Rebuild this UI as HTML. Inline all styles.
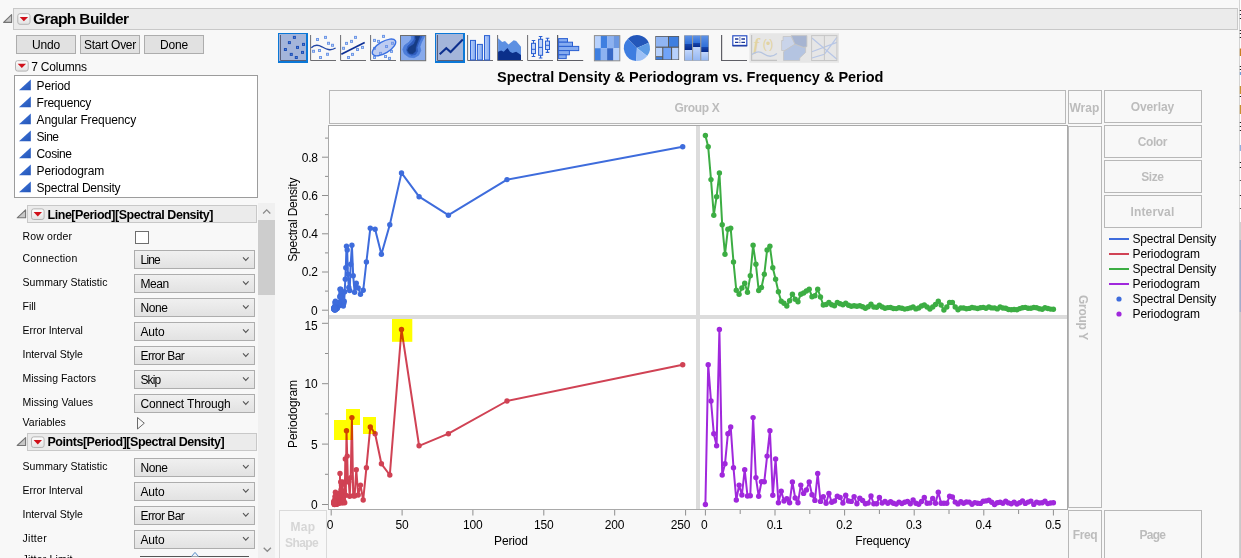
<!DOCTYPE html>
<html lang="en"><head><meta charset="utf-8"><title>Graph Builder</title>
<style>
html,body{margin:0;padding:0}
body{width:1241px;height:558px;overflow:hidden;background:#f8f8f8;position:relative;font-family:"Liberation Sans",sans-serif}
.t{position:absolute;white-space:nowrap;display:block}
.b{position:absolute;box-sizing:border-box}
svg{position:absolute;left:0;top:0}
svg text{font-family:"Liberation Sans",sans-serif}
</style></head>
<body>
<div class="b " style="left:13px;top:8px;width:1225px;height:22px;background:#ebebeb;border:1px solid #c8c8c8;"></div>
<span class="t " style="left:33.00px;top:9.80px;font-size:15.5px;line-height:17px;letter-spacing:-0.604px;color:#000;font-weight:bold;">Graph Builder</span>
<div class="b btn" style="left:16px;top:35px;width:60px;height:19px;background:#e1e1e1;border:1px solid #adadad;"></div>
<span class="t " style="left:32.06px;top:37.80px;font-size:12px;line-height:14px;letter-spacing:-0.200px;color:#000;">Undo</span>
<div class="b btn" style="left:80px;top:35px;width:60px;height:19px;background:#e1e1e1;border:1px solid #adadad;"></div>
<span class="t " style="left:84.00px;top:37.80px;font-size:12px;line-height:14px;letter-spacing:-0.268px;color:#000;">Start Over</span>
<div class="b btn" style="left:144px;top:35px;width:60px;height:19px;background:#e1e1e1;border:1px solid #adadad;"></div>
<span class="t " style="left:160.06px;top:37.80px;font-size:12px;line-height:14px;letter-spacing:-0.200px;color:#000;">Done</span>
<span class="t " style="left:31.20px;top:59.80px;font-size:12px;line-height:14px;letter-spacing:-0.195px;color:#000;">7 Columns</span>
<div class="b " style="left:14px;top:75px;width:244px;height:123px;background:#fff;border:1px solid #9c9c9c;"></div>
<span class="t " style="left:36.60px;top:78.80px;font-size:12px;line-height:14px;letter-spacing:-0.156px;color:#000;">Period</span>
<span class="t " style="left:36.60px;top:95.80px;font-size:12px;line-height:14px;letter-spacing:-0.244px;color:#000;">Frequency</span>
<span class="t " style="left:36.60px;top:112.80px;font-size:12px;line-height:14px;letter-spacing:-0.111px;color:#000;">Angular Frequency</span>
<span class="t " style="left:36.60px;top:129.80px;font-size:12px;line-height:14px;letter-spacing:-0.567px;color:#000;">Sine</span>
<span class="t " style="left:36.60px;top:146.80px;font-size:12px;line-height:14px;letter-spacing:-0.392px;color:#000;">Cosine</span>
<span class="t " style="left:36.60px;top:163.80px;font-size:12px;line-height:14px;letter-spacing:-0.109px;color:#000;">Periodogram</span>
<span class="t " style="left:36.60px;top:180.80px;font-size:12px;line-height:14px;letter-spacing:-0.226px;color:#000;">Spectral Density</span>
<div class="b " style="left:258px;top:203px;width:17px;height:355px;background:#f0f0f0;"></div>
<div class="b " style="left:258px;top:220px;width:17px;height:75px;background:#cdcdcd;"></div>
<div class="b " style="left:27px;top:205px;width:230px;height:18px;background:#ebebeb;border:1px solid #c8c8c8;"></div>
<span class="t " style="left:47.50px;top:207.60px;font-size:12.5px;line-height:14px;letter-spacing:-0.456px;color:#000;font-weight:bold;">Line[Period][Spectral Density]</span>
<div class="b " style="left:27px;top:433px;width:230px;height:18px;background:#ebebeb;border:1px solid #c8c8c8;"></div>
<span class="t " style="left:47.50px;top:435.30px;font-size:12.5px;line-height:14px;letter-spacing:-0.468px;color:#000;font-weight:bold;">Points[Period][Spectral Density]</span>
<span class="t " style="left:22.50px;top:229.80px;font-size:10.5px;line-height:12px;letter-spacing:0.130px;color:#000;">Row order</span>
<div class="b " style="left:135px;top:231px;width:14px;height:13px;background:#fff;border:1px solid #6e6e6e;"></div>
<div class="b " style="left:134px;top:250px;width:121px;height:19px;background:linear-gradient(#f0f0f0,#e2e2e2);border:1px solid #adadad;"></div>
<span class="t " style="left:22.50px;top:251.80px;font-size:10.5px;line-height:12px;letter-spacing:0.178px;color:#000;">Connection</span>
<span class="t " style="left:140.50px;top:253.00px;font-size:12px;line-height:14px;letter-spacing:-0.797px;color:#000;">Line</span>
<div class="b " style="left:134px;top:274px;width:121px;height:19px;background:linear-gradient(#f0f0f0,#e2e2e2);border:1px solid #adadad;"></div>
<span class="t " style="left:22.50px;top:275.80px;font-size:10.5px;line-height:12px;letter-spacing:0.018px;color:#000;">Summary Statistic</span>
<span class="t " style="left:140.50px;top:277.00px;font-size:12px;line-height:14px;letter-spacing:-0.442px;color:#000;">Mean</span>
<div class="b " style="left:134px;top:298px;width:121px;height:19px;background:linear-gradient(#f0f0f0,#e2e2e2);border:1px solid #adadad;"></div>
<span class="t " style="left:22.50px;top:299.80px;font-size:10.5px;line-height:12px;letter-spacing:-0.003px;color:#000;">Fill</span>
<span class="t " style="left:140.50px;top:301.00px;font-size:12px;line-height:14px;letter-spacing:-0.422px;color:#000;">None</span>
<div class="b " style="left:134px;top:322px;width:121px;height:19px;background:linear-gradient(#f0f0f0,#e2e2e2);border:1px solid #adadad;"></div>
<span class="t " style="left:22.50px;top:323.80px;font-size:10.5px;line-height:12px;letter-spacing:-0.020px;color:#000;">Error Interval</span>
<span class="t " style="left:140.50px;top:325.00px;font-size:12px;line-height:14px;letter-spacing:-0.171px;color:#000;">Auto</span>
<div class="b " style="left:134px;top:346px;width:121px;height:19px;background:linear-gradient(#f0f0f0,#e2e2e2);border:1px solid #adadad;"></div>
<span class="t " style="left:22.50px;top:347.80px;font-size:10.5px;line-height:12px;letter-spacing:-0.021px;color:#000;">Interval Style</span>
<span class="t " style="left:140.50px;top:349.00px;font-size:12px;line-height:14px;letter-spacing:-0.547px;color:#000;">Error Bar</span>
<div class="b " style="left:134px;top:370px;width:121px;height:19px;background:linear-gradient(#f0f0f0,#e2e2e2);border:1px solid #adadad;"></div>
<span class="t " style="left:22.50px;top:371.80px;font-size:10.5px;line-height:12px;letter-spacing:-0.008px;color:#000;">Missing Factors</span>
<span class="t " style="left:140.50px;top:373.00px;font-size:12px;line-height:14px;letter-spacing:-0.911px;color:#000;">Skip</span>
<div class="b " style="left:134px;top:394px;width:121px;height:19px;background:linear-gradient(#f0f0f0,#e2e2e2);border:1px solid #adadad;"></div>
<span class="t " style="left:22.50px;top:395.80px;font-size:10.5px;line-height:12px;letter-spacing:0.055px;color:#000;">Missing Values</span>
<span class="t " style="left:140.50px;top:397.00px;font-size:12px;line-height:14px;letter-spacing:-0.167px;color:#000;">Connect Through</span>
<span class="t " style="left:22.50px;top:415.80px;font-size:10.5px;line-height:12px;letter-spacing:0.045px;color:#000;">Variables</span>
<div class="b " style="left:134px;top:458px;width:121px;height:19px;background:linear-gradient(#f0f0f0,#e2e2e2);border:1px solid #adadad;"></div>
<span class="t " style="left:22.50px;top:459.55px;font-size:10.5px;line-height:12px;letter-spacing:0.018px;color:#000;">Summary Statistic</span>
<span class="t " style="left:140.50px;top:460.75px;font-size:12px;line-height:14px;letter-spacing:-0.422px;color:#000;">None</span>
<div class="b " style="left:134px;top:482px;width:121px;height:19px;background:linear-gradient(#f0f0f0,#e2e2e2);border:1px solid #adadad;"></div>
<span class="t " style="left:22.50px;top:483.55px;font-size:10.5px;line-height:12px;letter-spacing:-0.020px;color:#000;">Error Interval</span>
<span class="t " style="left:140.50px;top:484.75px;font-size:12px;line-height:14px;letter-spacing:-0.171px;color:#000;">Auto</span>
<div class="b " style="left:134px;top:506px;width:121px;height:19px;background:linear-gradient(#f0f0f0,#e2e2e2);border:1px solid #adadad;"></div>
<span class="t " style="left:22.50px;top:507.55px;font-size:10.5px;line-height:12px;letter-spacing:-0.021px;color:#000;">Interval Style</span>
<span class="t " style="left:140.50px;top:508.75px;font-size:12px;line-height:14px;letter-spacing:-0.547px;color:#000;">Error Bar</span>
<div class="b " style="left:134px;top:530px;width:121px;height:19px;background:linear-gradient(#f0f0f0,#e2e2e2);border:1px solid #adadad;"></div>
<span class="t " style="left:22.50px;top:531.55px;font-size:10.5px;line-height:12px;letter-spacing:0.274px;color:#000;">Jitter</span>
<span class="t " style="left:140.50px;top:532.75px;font-size:12px;line-height:14px;letter-spacing:-0.171px;color:#000;">Auto</span>
<span class="t " style="left:22.50px;top:553.00px;font-size:10.5px;line-height:12px;letter-spacing:0.180px;color:#000;">Jitter Limit</span>
<div class="b " style="left:329px;top:90px;width:737px;height:34px;background:#f8f8f8;border:1px solid #b8b8b8;"></div>
<span class="t " style="left:674.40px;top:100.80px;font-size:12px;line-height:14px;letter-spacing:-0.333px;color:#bcbcbc;font-weight:bold;">Group X</span>
<div class="b " style="left:1068px;top:90px;width:34px;height:34px;background:#f8f8f8;border:1px solid #b8b8b8;"></div>
<span class="t " style="left:1069.53px;top:100.80px;font-size:12px;line-height:14px;letter-spacing:-0.008px;color:#bcbcbc;font-weight:bold;">Wrap</span>
<div class="b " style="left:1104px;top:90px;width:98px;height:33px;background:#f8f8f8;border:1px solid #b8b8b8;"></div>
<span class="t " style="left:1130.65px;top:100.30px;font-size:12px;line-height:14px;letter-spacing:-0.076px;color:#bcbcbc;font-weight:bold;">Overlay</span>
<div class="b " style="left:1104px;top:125px;width:98px;height:33px;background:#f8f8f8;border:1px solid #b8b8b8;"></div>
<span class="t " style="left:1137.65px;top:135.30px;font-size:12px;line-height:14px;letter-spacing:-0.366px;color:#bcbcbc;font-weight:bold;">Color</span>
<div class="b " style="left:1104px;top:160px;width:98px;height:33px;background:#f8f8f8;border:1px solid #b8b8b8;"></div>
<span class="t " style="left:1141.15px;top:170.30px;font-size:12px;line-height:14px;letter-spacing:-0.378px;color:#bcbcbc;font-weight:bold;">Size</span>
<div class="b " style="left:1104px;top:195px;width:98px;height:33px;background:#f8f8f8;border:1px solid #b8b8b8;"></div>
<span class="t " style="left:1130.40px;top:205.30px;font-size:12px;line-height:14px;letter-spacing:0.164px;color:#bcbcbc;font-weight:bold;">Interval</span>
<div class="b " style="left:1068px;top:126px;width:34px;height:382px;background:#f8f8f8;border:1px solid #b8b8b8;"></div>
<div class="b " style="left:1068px;top:510px;width:34px;height:52px;background:#f8f8f8;border:1px solid #b8b8b8;"></div>
<span class="t " style="left:1072.75px;top:527.80px;font-size:12px;line-height:14px;letter-spacing:-0.376px;color:#bcbcbc;font-weight:bold;">Freq</span>
<div class="b " style="left:1104px;top:510px;width:98px;height:52px;background:#f8f8f8;border:1px solid #b8b8b8;"></div>
<span class="t " style="left:1139.53px;top:527.80px;font-size:12px;line-height:14px;letter-spacing:-0.733px;color:#bcbcbc;font-weight:bold;">Page</span>
<div class="b " style="left:279px;top:510px;width:48px;height:52px;background:#f8f8f8;border:1px solid #dadada;"></div>
<span class="t " style="left:290.50px;top:519.80px;font-size:12px;line-height:14px;letter-spacing:0.333px;color:#d6d6d6;font-weight:bold;">Map</span>
<span class="t " style="left:284.98px;top:535.70px;font-size:12px;line-height:14px;letter-spacing:-0.552px;color:#d6d6d6;font-weight:bold;">Shape</span>
<span class="t title" style="left:497.00px;top:69.30px;font-size:14.5px;line-height:16px;letter-spacing:-0.006px;color:#000;font-weight:bold;">Spectral Density &amp; Periodogram vs. Frequency &amp; Period</span>
<span class="t " style="left:1132.50px;top:232.20px;font-size:12px;line-height:14px;letter-spacing:-0.242px;color:#000;">Spectral Density</span>
<span class="t " style="left:1132.50px;top:247.20px;font-size:12px;line-height:14px;letter-spacing:-0.109px;color:#000;">Periodogram</span>
<span class="t " style="left:1132.50px;top:262.20px;font-size:12px;line-height:14px;letter-spacing:-0.242px;color:#000;">Spectral Density</span>
<span class="t " style="left:1132.50px;top:277.20px;font-size:12px;line-height:14px;letter-spacing:-0.109px;color:#000;">Periodogram</span>
<span class="t " style="left:1132.50px;top:292.20px;font-size:12px;line-height:14px;letter-spacing:-0.242px;color:#000;">Spectral Density</span>
<span class="t " style="left:1132.50px;top:307.20px;font-size:12px;line-height:14px;letter-spacing:-0.109px;color:#000;">Periodogram</span>
<svg width="1241" height="558" viewBox="0 0 1241 558">
<rect x="328" y="125" width="740" height="385" fill="#fff"/>
<defs><clipPath id="cTL"><rect x="329" y="126" width="367" height="189"/></clipPath><clipPath id="cTR"><rect x="700" y="126" width="367.5" height="189"/></clipPath><clipPath id="cBL"><rect x="329" y="319" width="367" height="190"/></clipPath><clipPath id="cBR"><rect x="700" y="319" width="367.5" height="190"/></clipPath></defs>
<g clip-path="url(#cTL)"><polyline points="682.7,146.8 507.0,179.6 448.4,215.2 419.1,196.7 401.5,172.9 389.8,224.8 381.4,254.3 375.1,229.2 370.3,228.3 366.4,262.0 363.2,290.3 360.5,294.2 358.2,288.0 356.3,283.3 354.6,292.3 353.2,275.8 351.9,245.3 350.7,264.3 349.7,290.5 348.8,287.5 347.9,274.2 347.2,250.0 346.5,246.3 345.8,267.8 345.3,279.2 344.7,291.7 344.2,301.3 343.8,303.3 343.3,306.0 342.9,300.8 342.5,294.2 342.2,299.2 341.9,301.7 341.5,294.2 341.2,293.0 341.0,291.0 340.7,289.2 340.5,296.7 340.2,295.8 340.0,289.2 339.8,297.0 339.6,305.0 339.4,304.5 339.2,302.5 339.0,304.7 338.8,305.8 338.7,302.5 338.5,303.7 338.4,304.7 338.2,303.3 338.1,305.3 338.0,306.3 337.8,305.7 337.7,306.3 337.6,305.8 337.5,306.7 337.4,308.3 337.3,306.7 337.2,304.2 337.1,307.0 337.0,307.3 336.9,305.3 336.8,307.0 336.7,308.3 336.6,307.6 336.5,307.5 336.4,308.5 336.4,308.6 336.3,307.8 336.2,308.2 336.2,309.1 336.1,308.6 336.0,307.9 336.0,307.0 335.9,308.9 335.8,308.0 335.8,306.0 335.7,305.0 335.6,307.0 335.6,309.0 335.5,307.0 335.5,304.5 335.4,301.3 335.4,305.0 335.3,310.0 335.3,307.0 335.2,302.5 335.2,302.5 335.1,307.0 335.1,309.7 335.1,308.0 335.0,308.0 335.0,308.8 334.9,308.4 334.9,307.5 334.9,307.9 334.8,308.5 334.8,307.8 334.8,307.4 334.7,308.2 334.7,307.0 334.6,307.9 334.6,307.9 334.6,308.9 334.5,307.0 334.5,308.0 334.5,308.3 334.5,309.5 334.4,309.7 334.4,309.5 334.4,309.7 334.3,308.6 334.3,307.7 334.3,307.4 334.3,308.3 334.2,308.3 334.2,307.5 334.2,307.8 334.2,308.8 334.1,309.3 334.1,307.8 334.1,308.5 334.1,309.1 334.0,309.2" fill="none" stroke="#3e6cdc" stroke-width="2" stroke-linejoin="round"/>
<circle cx="682.7" cy="146.8" r="2.7" fill="#3e6cdc"/><circle cx="507.0" cy="179.6" r="2.7" fill="#3e6cdc"/><circle cx="448.4" cy="215.2" r="2.7" fill="#3e6cdc"/><circle cx="419.1" cy="196.7" r="2.7" fill="#3e6cdc"/><circle cx="401.5" cy="172.9" r="2.7" fill="#3e6cdc"/><circle cx="389.8" cy="224.8" r="2.7" fill="#3e6cdc"/><circle cx="381.4" cy="254.3" r="2.7" fill="#3e6cdc"/><circle cx="375.1" cy="229.2" r="2.7" fill="#3e6cdc"/><circle cx="370.3" cy="228.3" r="2.7" fill="#3e6cdc"/><circle cx="366.4" cy="262.0" r="2.7" fill="#3e6cdc"/><circle cx="363.2" cy="290.3" r="2.7" fill="#3e6cdc"/><circle cx="360.5" cy="294.2" r="2.7" fill="#3e6cdc"/><circle cx="358.2" cy="288.0" r="2.7" fill="#3e6cdc"/><circle cx="356.3" cy="283.3" r="2.7" fill="#3e6cdc"/><circle cx="354.6" cy="292.3" r="2.7" fill="#3e6cdc"/><circle cx="353.2" cy="275.8" r="2.7" fill="#3e6cdc"/><circle cx="351.9" cy="245.3" r="2.7" fill="#3e6cdc"/><circle cx="350.7" cy="264.3" r="2.7" fill="#3e6cdc"/><circle cx="349.7" cy="290.5" r="2.7" fill="#3e6cdc"/><circle cx="348.8" cy="287.5" r="2.7" fill="#3e6cdc"/><circle cx="347.9" cy="274.2" r="2.7" fill="#3e6cdc"/><circle cx="347.2" cy="250.0" r="2.7" fill="#3e6cdc"/><circle cx="346.5" cy="246.3" r="2.7" fill="#3e6cdc"/><circle cx="345.8" cy="267.8" r="2.7" fill="#3e6cdc"/><circle cx="345.3" cy="279.2" r="2.7" fill="#3e6cdc"/><circle cx="344.7" cy="291.7" r="2.7" fill="#3e6cdc"/><circle cx="344.2" cy="301.3" r="2.7" fill="#3e6cdc"/><circle cx="343.8" cy="303.3" r="2.7" fill="#3e6cdc"/><circle cx="343.3" cy="306.0" r="2.7" fill="#3e6cdc"/><circle cx="342.9" cy="300.8" r="2.7" fill="#3e6cdc"/><circle cx="342.5" cy="294.2" r="2.7" fill="#3e6cdc"/><circle cx="342.2" cy="299.2" r="2.7" fill="#3e6cdc"/><circle cx="341.9" cy="301.7" r="2.7" fill="#3e6cdc"/><circle cx="341.5" cy="294.2" r="2.7" fill="#3e6cdc"/><circle cx="341.2" cy="293.0" r="2.7" fill="#3e6cdc"/><circle cx="341.0" cy="291.0" r="2.7" fill="#3e6cdc"/><circle cx="340.7" cy="289.2" r="2.7" fill="#3e6cdc"/><circle cx="340.5" cy="296.7" r="2.7" fill="#3e6cdc"/><circle cx="340.2" cy="295.8" r="2.7" fill="#3e6cdc"/><circle cx="340.0" cy="289.2" r="2.7" fill="#3e6cdc"/><circle cx="339.8" cy="297.0" r="2.7" fill="#3e6cdc"/><circle cx="339.6" cy="305.0" r="2.7" fill="#3e6cdc"/><circle cx="339.4" cy="304.5" r="2.7" fill="#3e6cdc"/><circle cx="339.2" cy="302.5" r="2.7" fill="#3e6cdc"/><circle cx="339.0" cy="304.7" r="2.7" fill="#3e6cdc"/><circle cx="338.8" cy="305.8" r="2.7" fill="#3e6cdc"/><circle cx="338.7" cy="302.5" r="2.7" fill="#3e6cdc"/><circle cx="338.5" cy="303.7" r="2.7" fill="#3e6cdc"/><circle cx="338.4" cy="304.7" r="2.7" fill="#3e6cdc"/><circle cx="338.2" cy="303.3" r="2.7" fill="#3e6cdc"/><circle cx="338.1" cy="305.3" r="2.7" fill="#3e6cdc"/><circle cx="338.0" cy="306.3" r="2.7" fill="#3e6cdc"/><circle cx="337.8" cy="305.7" r="2.7" fill="#3e6cdc"/><circle cx="337.7" cy="306.3" r="2.7" fill="#3e6cdc"/><circle cx="337.6" cy="305.8" r="2.7" fill="#3e6cdc"/><circle cx="337.5" cy="306.7" r="2.7" fill="#3e6cdc"/><circle cx="337.4" cy="308.3" r="2.7" fill="#3e6cdc"/><circle cx="337.3" cy="306.7" r="2.7" fill="#3e6cdc"/><circle cx="337.2" cy="304.2" r="2.7" fill="#3e6cdc"/><circle cx="337.1" cy="307.0" r="2.7" fill="#3e6cdc"/><circle cx="337.0" cy="307.3" r="2.7" fill="#3e6cdc"/><circle cx="336.9" cy="305.3" r="2.7" fill="#3e6cdc"/><circle cx="336.8" cy="307.0" r="2.7" fill="#3e6cdc"/><circle cx="336.7" cy="308.3" r="2.7" fill="#3e6cdc"/><circle cx="336.6" cy="307.6" r="2.7" fill="#3e6cdc"/><circle cx="336.5" cy="307.5" r="2.7" fill="#3e6cdc"/><circle cx="336.4" cy="308.5" r="2.7" fill="#3e6cdc"/><circle cx="336.4" cy="308.6" r="2.7" fill="#3e6cdc"/><circle cx="336.3" cy="307.8" r="2.7" fill="#3e6cdc"/><circle cx="336.2" cy="308.2" r="2.7" fill="#3e6cdc"/><circle cx="336.2" cy="309.1" r="2.7" fill="#3e6cdc"/><circle cx="336.1" cy="308.6" r="2.7" fill="#3e6cdc"/><circle cx="336.0" cy="307.9" r="2.7" fill="#3e6cdc"/><circle cx="336.0" cy="307.0" r="2.7" fill="#3e6cdc"/><circle cx="335.9" cy="308.9" r="2.7" fill="#3e6cdc"/><circle cx="335.8" cy="308.0" r="2.7" fill="#3e6cdc"/><circle cx="335.8" cy="306.0" r="2.7" fill="#3e6cdc"/><circle cx="335.7" cy="305.0" r="2.7" fill="#3e6cdc"/><circle cx="335.6" cy="307.0" r="2.7" fill="#3e6cdc"/><circle cx="335.6" cy="309.0" r="2.7" fill="#3e6cdc"/><circle cx="335.5" cy="307.0" r="2.7" fill="#3e6cdc"/><circle cx="335.5" cy="304.5" r="2.7" fill="#3e6cdc"/><circle cx="335.4" cy="301.3" r="2.7" fill="#3e6cdc"/><circle cx="335.4" cy="305.0" r="2.7" fill="#3e6cdc"/><circle cx="335.3" cy="310.0" r="2.7" fill="#3e6cdc"/><circle cx="335.3" cy="307.0" r="2.7" fill="#3e6cdc"/><circle cx="335.2" cy="302.5" r="2.7" fill="#3e6cdc"/><circle cx="335.2" cy="302.5" r="2.7" fill="#3e6cdc"/><circle cx="335.1" cy="307.0" r="2.7" fill="#3e6cdc"/><circle cx="335.1" cy="309.7" r="2.7" fill="#3e6cdc"/><circle cx="335.1" cy="308.0" r="2.7" fill="#3e6cdc"/><circle cx="335.0" cy="308.0" r="2.7" fill="#3e6cdc"/><circle cx="335.0" cy="308.8" r="2.7" fill="#3e6cdc"/><circle cx="334.9" cy="308.4" r="2.7" fill="#3e6cdc"/><circle cx="334.9" cy="307.5" r="2.7" fill="#3e6cdc"/><circle cx="334.9" cy="307.9" r="2.7" fill="#3e6cdc"/><circle cx="334.8" cy="308.5" r="2.7" fill="#3e6cdc"/><circle cx="334.8" cy="307.8" r="2.7" fill="#3e6cdc"/><circle cx="334.8" cy="307.4" r="2.7" fill="#3e6cdc"/><circle cx="334.7" cy="308.2" r="2.7" fill="#3e6cdc"/><circle cx="334.7" cy="307.0" r="2.7" fill="#3e6cdc"/><circle cx="334.6" cy="307.9" r="2.7" fill="#3e6cdc"/><circle cx="334.6" cy="307.9" r="2.7" fill="#3e6cdc"/><circle cx="334.6" cy="308.9" r="2.7" fill="#3e6cdc"/><circle cx="334.5" cy="307.0" r="2.7" fill="#3e6cdc"/><circle cx="334.5" cy="308.0" r="2.7" fill="#3e6cdc"/><circle cx="334.5" cy="308.3" r="2.7" fill="#3e6cdc"/><circle cx="334.5" cy="309.5" r="2.7" fill="#3e6cdc"/><circle cx="334.4" cy="309.7" r="2.7" fill="#3e6cdc"/><circle cx="334.4" cy="309.5" r="2.7" fill="#3e6cdc"/><circle cx="334.4" cy="309.7" r="2.7" fill="#3e6cdc"/><circle cx="334.3" cy="308.6" r="2.7" fill="#3e6cdc"/><circle cx="334.3" cy="307.7" r="2.7" fill="#3e6cdc"/><circle cx="334.3" cy="307.4" r="2.7" fill="#3e6cdc"/><circle cx="334.3" cy="308.3" r="2.7" fill="#3e6cdc"/><circle cx="334.2" cy="308.3" r="2.7" fill="#3e6cdc"/><circle cx="334.2" cy="307.5" r="2.7" fill="#3e6cdc"/><circle cx="334.2" cy="307.8" r="2.7" fill="#3e6cdc"/><circle cx="334.2" cy="308.8" r="2.7" fill="#3e6cdc"/><circle cx="334.1" cy="309.3" r="2.7" fill="#3e6cdc"/><circle cx="334.1" cy="307.8" r="2.7" fill="#3e6cdc"/><circle cx="334.1" cy="308.5" r="2.7" fill="#3e6cdc"/><circle cx="334.1" cy="309.1" r="2.7" fill="#3e6cdc"/><circle cx="334.0" cy="309.2" r="2.7" fill="#3e6cdc"/></g>
<g clip-path="url(#cTR)"><polyline points="705.4,135.5 708.2,146.8 711.0,179.6 713.8,215.2 716.6,196.7 719.4,172.9 722.2,224.8 725.0,254.3 727.9,229.2 730.7,228.3 733.5,262.0 736.3,290.3 739.1,294.2 741.9,288.0 744.7,283.3 747.5,292.3 750.3,275.8 753.1,245.3 755.9,264.3 758.7,290.5 761.5,287.5 764.3,274.2 767.1,250.0 769.9,246.3 772.8,267.8 775.6,279.2 778.4,291.7 781.2,301.3 784.0,303.3 786.8,306.0 789.6,300.8 792.4,294.2 795.2,299.2 798.0,301.7 800.8,294.2 803.6,293.0 806.4,291.0 809.2,289.2 812.0,296.7 814.9,295.8 817.7,289.2 820.5,297.0 823.3,305.0 826.1,304.5 828.9,302.5 831.7,304.7 834.5,305.8 837.3,302.5 840.1,303.7 842.9,304.7 845.7,303.3 848.5,305.3 851.3,306.3 854.1,305.7 856.9,306.3 859.8,305.8 862.6,306.7 865.4,308.3 868.2,306.7 871.0,304.2 873.8,307.0 876.6,307.3 879.4,305.3 882.2,307.0 885.0,308.3 887.8,307.6 890.6,307.5 893.4,308.5 896.2,308.6 899.0,307.8 901.9,308.2 904.7,309.1 907.5,308.6 910.3,307.9 913.1,307.0 915.9,308.9 918.7,308.0 921.5,306.0 924.3,305.0 927.1,307.0 929.9,309.0 932.7,307.0 935.5,304.5 938.3,301.3 941.1,305.0 943.9,310.0 946.8,307.0 949.6,302.5 952.4,302.5 955.2,307.0 958.0,309.7 960.8,308.0 963.6,308.0 966.4,308.8 969.2,308.4 972.0,307.5 974.8,307.9 977.6,308.5 980.4,307.8 983.2,307.4 986.0,308.2 988.9,307.0 991.7,307.9 994.5,307.9 997.3,308.9 1000.1,307.0 1002.9,308.0 1005.7,308.3 1008.5,309.5 1011.3,309.7 1014.1,309.5 1016.9,309.7 1019.7,308.6 1022.5,307.7 1025.3,307.4 1028.1,308.3 1030.9,308.3 1033.8,307.5 1036.6,307.8 1039.4,308.8 1042.2,309.3 1045.0,307.8 1047.8,308.5 1050.6,309.1 1053.4,309.2" fill="none" stroke="#3cad43" stroke-width="2" stroke-linejoin="round"/>
<circle cx="705.4" cy="135.5" r="2.7" fill="#3cad43"/><circle cx="708.2" cy="146.8" r="2.7" fill="#3cad43"/><circle cx="711.0" cy="179.6" r="2.7" fill="#3cad43"/><circle cx="713.8" cy="215.2" r="2.7" fill="#3cad43"/><circle cx="716.6" cy="196.7" r="2.7" fill="#3cad43"/><circle cx="719.4" cy="172.9" r="2.7" fill="#3cad43"/><circle cx="722.2" cy="224.8" r="2.7" fill="#3cad43"/><circle cx="725.0" cy="254.3" r="2.7" fill="#3cad43"/><circle cx="727.9" cy="229.2" r="2.7" fill="#3cad43"/><circle cx="730.7" cy="228.3" r="2.7" fill="#3cad43"/><circle cx="733.5" cy="262.0" r="2.7" fill="#3cad43"/><circle cx="736.3" cy="290.3" r="2.7" fill="#3cad43"/><circle cx="739.1" cy="294.2" r="2.7" fill="#3cad43"/><circle cx="741.9" cy="288.0" r="2.7" fill="#3cad43"/><circle cx="744.7" cy="283.3" r="2.7" fill="#3cad43"/><circle cx="747.5" cy="292.3" r="2.7" fill="#3cad43"/><circle cx="750.3" cy="275.8" r="2.7" fill="#3cad43"/><circle cx="753.1" cy="245.3" r="2.7" fill="#3cad43"/><circle cx="755.9" cy="264.3" r="2.7" fill="#3cad43"/><circle cx="758.7" cy="290.5" r="2.7" fill="#3cad43"/><circle cx="761.5" cy="287.5" r="2.7" fill="#3cad43"/><circle cx="764.3" cy="274.2" r="2.7" fill="#3cad43"/><circle cx="767.1" cy="250.0" r="2.7" fill="#3cad43"/><circle cx="769.9" cy="246.3" r="2.7" fill="#3cad43"/><circle cx="772.8" cy="267.8" r="2.7" fill="#3cad43"/><circle cx="775.6" cy="279.2" r="2.7" fill="#3cad43"/><circle cx="778.4" cy="291.7" r="2.7" fill="#3cad43"/><circle cx="781.2" cy="301.3" r="2.7" fill="#3cad43"/><circle cx="784.0" cy="303.3" r="2.7" fill="#3cad43"/><circle cx="786.8" cy="306.0" r="2.7" fill="#3cad43"/><circle cx="789.6" cy="300.8" r="2.7" fill="#3cad43"/><circle cx="792.4" cy="294.2" r="2.7" fill="#3cad43"/><circle cx="795.2" cy="299.2" r="2.7" fill="#3cad43"/><circle cx="798.0" cy="301.7" r="2.7" fill="#3cad43"/><circle cx="800.8" cy="294.2" r="2.7" fill="#3cad43"/><circle cx="803.6" cy="293.0" r="2.7" fill="#3cad43"/><circle cx="806.4" cy="291.0" r="2.7" fill="#3cad43"/><circle cx="809.2" cy="289.2" r="2.7" fill="#3cad43"/><circle cx="812.0" cy="296.7" r="2.7" fill="#3cad43"/><circle cx="814.9" cy="295.8" r="2.7" fill="#3cad43"/><circle cx="817.7" cy="289.2" r="2.7" fill="#3cad43"/><circle cx="820.5" cy="297.0" r="2.7" fill="#3cad43"/><circle cx="823.3" cy="305.0" r="2.7" fill="#3cad43"/><circle cx="826.1" cy="304.5" r="2.7" fill="#3cad43"/><circle cx="828.9" cy="302.5" r="2.7" fill="#3cad43"/><circle cx="831.7" cy="304.7" r="2.7" fill="#3cad43"/><circle cx="834.5" cy="305.8" r="2.7" fill="#3cad43"/><circle cx="837.3" cy="302.5" r="2.7" fill="#3cad43"/><circle cx="840.1" cy="303.7" r="2.7" fill="#3cad43"/><circle cx="842.9" cy="304.7" r="2.7" fill="#3cad43"/><circle cx="845.7" cy="303.3" r="2.7" fill="#3cad43"/><circle cx="848.5" cy="305.3" r="2.7" fill="#3cad43"/><circle cx="851.3" cy="306.3" r="2.7" fill="#3cad43"/><circle cx="854.1" cy="305.7" r="2.7" fill="#3cad43"/><circle cx="856.9" cy="306.3" r="2.7" fill="#3cad43"/><circle cx="859.8" cy="305.8" r="2.7" fill="#3cad43"/><circle cx="862.6" cy="306.7" r="2.7" fill="#3cad43"/><circle cx="865.4" cy="308.3" r="2.7" fill="#3cad43"/><circle cx="868.2" cy="306.7" r="2.7" fill="#3cad43"/><circle cx="871.0" cy="304.2" r="2.7" fill="#3cad43"/><circle cx="873.8" cy="307.0" r="2.7" fill="#3cad43"/><circle cx="876.6" cy="307.3" r="2.7" fill="#3cad43"/><circle cx="879.4" cy="305.3" r="2.7" fill="#3cad43"/><circle cx="882.2" cy="307.0" r="2.7" fill="#3cad43"/><circle cx="885.0" cy="308.3" r="2.7" fill="#3cad43"/><circle cx="887.8" cy="307.6" r="2.7" fill="#3cad43"/><circle cx="890.6" cy="307.5" r="2.7" fill="#3cad43"/><circle cx="893.4" cy="308.5" r="2.7" fill="#3cad43"/><circle cx="896.2" cy="308.6" r="2.7" fill="#3cad43"/><circle cx="899.0" cy="307.8" r="2.7" fill="#3cad43"/><circle cx="901.9" cy="308.2" r="2.7" fill="#3cad43"/><circle cx="904.7" cy="309.1" r="2.7" fill="#3cad43"/><circle cx="907.5" cy="308.6" r="2.7" fill="#3cad43"/><circle cx="910.3" cy="307.9" r="2.7" fill="#3cad43"/><circle cx="913.1" cy="307.0" r="2.7" fill="#3cad43"/><circle cx="915.9" cy="308.9" r="2.7" fill="#3cad43"/><circle cx="918.7" cy="308.0" r="2.7" fill="#3cad43"/><circle cx="921.5" cy="306.0" r="2.7" fill="#3cad43"/><circle cx="924.3" cy="305.0" r="2.7" fill="#3cad43"/><circle cx="927.1" cy="307.0" r="2.7" fill="#3cad43"/><circle cx="929.9" cy="309.0" r="2.7" fill="#3cad43"/><circle cx="932.7" cy="307.0" r="2.7" fill="#3cad43"/><circle cx="935.5" cy="304.5" r="2.7" fill="#3cad43"/><circle cx="938.3" cy="301.3" r="2.7" fill="#3cad43"/><circle cx="941.1" cy="305.0" r="2.7" fill="#3cad43"/><circle cx="943.9" cy="310.0" r="2.7" fill="#3cad43"/><circle cx="946.8" cy="307.0" r="2.7" fill="#3cad43"/><circle cx="949.6" cy="302.5" r="2.7" fill="#3cad43"/><circle cx="952.4" cy="302.5" r="2.7" fill="#3cad43"/><circle cx="955.2" cy="307.0" r="2.7" fill="#3cad43"/><circle cx="958.0" cy="309.7" r="2.7" fill="#3cad43"/><circle cx="960.8" cy="308.0" r="2.7" fill="#3cad43"/><circle cx="963.6" cy="308.0" r="2.7" fill="#3cad43"/><circle cx="966.4" cy="308.8" r="2.7" fill="#3cad43"/><circle cx="969.2" cy="308.4" r="2.7" fill="#3cad43"/><circle cx="972.0" cy="307.5" r="2.7" fill="#3cad43"/><circle cx="974.8" cy="307.9" r="2.7" fill="#3cad43"/><circle cx="977.6" cy="308.5" r="2.7" fill="#3cad43"/><circle cx="980.4" cy="307.8" r="2.7" fill="#3cad43"/><circle cx="983.2" cy="307.4" r="2.7" fill="#3cad43"/><circle cx="986.0" cy="308.2" r="2.7" fill="#3cad43"/><circle cx="988.9" cy="307.0" r="2.7" fill="#3cad43"/><circle cx="991.7" cy="307.9" r="2.7" fill="#3cad43"/><circle cx="994.5" cy="307.9" r="2.7" fill="#3cad43"/><circle cx="997.3" cy="308.9" r="2.7" fill="#3cad43"/><circle cx="1000.1" cy="307.0" r="2.7" fill="#3cad43"/><circle cx="1002.9" cy="308.0" r="2.7" fill="#3cad43"/><circle cx="1005.7" cy="308.3" r="2.7" fill="#3cad43"/><circle cx="1008.5" cy="309.5" r="2.7" fill="#3cad43"/><circle cx="1011.3" cy="309.7" r="2.7" fill="#3cad43"/><circle cx="1014.1" cy="309.5" r="2.7" fill="#3cad43"/><circle cx="1016.9" cy="309.7" r="2.7" fill="#3cad43"/><circle cx="1019.7" cy="308.6" r="2.7" fill="#3cad43"/><circle cx="1022.5" cy="307.7" r="2.7" fill="#3cad43"/><circle cx="1025.3" cy="307.4" r="2.7" fill="#3cad43"/><circle cx="1028.1" cy="308.3" r="2.7" fill="#3cad43"/><circle cx="1030.9" cy="308.3" r="2.7" fill="#3cad43"/><circle cx="1033.8" cy="307.5" r="2.7" fill="#3cad43"/><circle cx="1036.6" cy="307.8" r="2.7" fill="#3cad43"/><circle cx="1039.4" cy="308.8" r="2.7" fill="#3cad43"/><circle cx="1042.2" cy="309.3" r="2.7" fill="#3cad43"/><circle cx="1045.0" cy="307.8" r="2.7" fill="#3cad43"/><circle cx="1047.8" cy="308.5" r="2.7" fill="#3cad43"/><circle cx="1050.6" cy="309.1" r="2.7" fill="#3cad43"/><circle cx="1053.4" cy="309.2" r="2.7" fill="#3cad43"/></g>
<g clip-path="url(#cBL)"><polyline points="682.7,364.7 507.0,401.0 448.4,433.7 419.1,445.8 401.5,329.5 389.8,475.0 381.4,463.8 375.1,433.7 370.3,426.9 366.4,467.8 363.2,500.0 360.5,485.1 358.2,495.0 356.3,469.7 354.6,496.0 353.2,495.7 351.9,417.6 350.7,477.6 349.7,496.3 348.8,481.8 347.9,481.7 347.2,456.1 346.5,430.7 345.8,495.3 345.3,459.0 344.7,502.7 344.2,491.3 343.8,501.0 343.3,498.8 342.9,502.7 342.5,482.0 342.2,498.0 341.9,502.7 341.5,485.1 341.2,493.4 341.0,490.0 340.7,482.0 340.5,494.7 340.2,500.4 340.0,473.5 339.8,501.4 339.6,496.6 339.4,503.3 339.2,493.4 339.0,502.3 338.8,501.0 338.7,496.3 338.5,497.4 338.4,503.1 338.2,495.2 338.1,501.0 338.0,501.4 337.8,496.6 337.7,503.7 337.6,498.3 337.5,500.5 337.4,503.8 337.3,503.1 337.2,496.0 337.1,503.8 337.0,503.8 336.9,497.5 336.8,503.1 336.7,501.4 336.6,503.3 336.5,501.7 336.4,503.3 336.4,504.1 336.3,502.1 336.2,503.5 336.2,502.3 336.1,501.4 336.0,503.7 336.0,500.0 335.9,503.3 335.8,504.2 335.8,501.5 335.7,497.5 335.6,503.3 335.6,503.1 335.5,498.5 335.5,503.3 335.4,492.2 335.4,503.3 335.3,503.3 335.3,503.3 335.2,496.3 335.2,497.0 335.1,502.1 335.1,503.9 335.1,501.7 335.0,503.2 335.0,502.0 334.9,502.1 334.9,504.3 334.9,502.6 334.8,503.2 334.8,503.4 334.8,501.2 334.7,500.9 334.7,500.3 334.6,502.3 334.6,504.5 334.6,502.7 334.5,502.2 334.5,503.3 334.5,501.3 334.5,502.9 334.4,503.8 334.4,502.3 334.4,504.0 334.3,502.7 334.3,500.9 334.3,503.4 334.3,502.1 334.2,501.1 334.2,504.4 334.2,502.1 334.2,503.0 334.1,502.7 334.1,501.2 334.1,503.6 334.1,503.0 334.0,502.7" fill="none" stroke="#d04254" stroke-width="2" stroke-linejoin="round"/>
<circle cx="682.7" cy="364.7" r="2.7" fill="#d04254"/><circle cx="507.0" cy="401.0" r="2.7" fill="#d04254"/><circle cx="448.4" cy="433.7" r="2.7" fill="#d04254"/><circle cx="419.1" cy="445.8" r="2.7" fill="#d04254"/><circle cx="401.5" cy="329.5" r="2.7" fill="#d04254"/><circle cx="389.8" cy="475.0" r="2.7" fill="#d04254"/><circle cx="381.4" cy="463.8" r="2.7" fill="#d04254"/><circle cx="375.1" cy="433.7" r="2.7" fill="#d04254"/><circle cx="370.3" cy="426.9" r="2.7" fill="#d04254"/><circle cx="366.4" cy="467.8" r="2.7" fill="#d04254"/><circle cx="363.2" cy="500.0" r="2.7" fill="#d04254"/><circle cx="360.5" cy="485.1" r="2.7" fill="#d04254"/><circle cx="358.2" cy="495.0" r="2.7" fill="#d04254"/><circle cx="356.3" cy="469.7" r="2.7" fill="#d04254"/><circle cx="354.6" cy="496.0" r="2.7" fill="#d04254"/><circle cx="353.2" cy="495.7" r="2.7" fill="#d04254"/><circle cx="351.9" cy="417.6" r="2.7" fill="#d04254"/><circle cx="350.7" cy="477.6" r="2.7" fill="#d04254"/><circle cx="349.7" cy="496.3" r="2.7" fill="#d04254"/><circle cx="348.8" cy="481.8" r="2.7" fill="#d04254"/><circle cx="347.9" cy="481.7" r="2.7" fill="#d04254"/><circle cx="347.2" cy="456.1" r="2.7" fill="#d04254"/><circle cx="346.5" cy="430.7" r="2.7" fill="#d04254"/><circle cx="345.8" cy="495.3" r="2.7" fill="#d04254"/><circle cx="345.3" cy="459.0" r="2.7" fill="#d04254"/><circle cx="344.7" cy="502.7" r="2.7" fill="#d04254"/><circle cx="344.2" cy="491.3" r="2.7" fill="#d04254"/><circle cx="343.8" cy="501.0" r="2.7" fill="#d04254"/><circle cx="343.3" cy="498.8" r="2.7" fill="#d04254"/><circle cx="342.9" cy="502.7" r="2.7" fill="#d04254"/><circle cx="342.5" cy="482.0" r="2.7" fill="#d04254"/><circle cx="342.2" cy="498.0" r="2.7" fill="#d04254"/><circle cx="341.9" cy="502.7" r="2.7" fill="#d04254"/><circle cx="341.5" cy="485.1" r="2.7" fill="#d04254"/><circle cx="341.2" cy="493.4" r="2.7" fill="#d04254"/><circle cx="341.0" cy="490.0" r="2.7" fill="#d04254"/><circle cx="340.7" cy="482.0" r="2.7" fill="#d04254"/><circle cx="340.5" cy="494.7" r="2.7" fill="#d04254"/><circle cx="340.2" cy="500.4" r="2.7" fill="#d04254"/><circle cx="340.0" cy="473.5" r="2.7" fill="#d04254"/><circle cx="339.8" cy="501.4" r="2.7" fill="#d04254"/><circle cx="339.6" cy="496.6" r="2.7" fill="#d04254"/><circle cx="339.4" cy="503.3" r="2.7" fill="#d04254"/><circle cx="339.2" cy="493.4" r="2.7" fill="#d04254"/><circle cx="339.0" cy="502.3" r="2.7" fill="#d04254"/><circle cx="338.8" cy="501.0" r="2.7" fill="#d04254"/><circle cx="338.7" cy="496.3" r="2.7" fill="#d04254"/><circle cx="338.5" cy="497.4" r="2.7" fill="#d04254"/><circle cx="338.4" cy="503.1" r="2.7" fill="#d04254"/><circle cx="338.2" cy="495.2" r="2.7" fill="#d04254"/><circle cx="338.1" cy="501.0" r="2.7" fill="#d04254"/><circle cx="338.0" cy="501.4" r="2.7" fill="#d04254"/><circle cx="337.8" cy="496.6" r="2.7" fill="#d04254"/><circle cx="337.7" cy="503.7" r="2.7" fill="#d04254"/><circle cx="337.6" cy="498.3" r="2.7" fill="#d04254"/><circle cx="337.5" cy="500.5" r="2.7" fill="#d04254"/><circle cx="337.4" cy="503.8" r="2.7" fill="#d04254"/><circle cx="337.3" cy="503.1" r="2.7" fill="#d04254"/><circle cx="337.2" cy="496.0" r="2.7" fill="#d04254"/><circle cx="337.1" cy="503.8" r="2.7" fill="#d04254"/><circle cx="337.0" cy="503.8" r="2.7" fill="#d04254"/><circle cx="336.9" cy="497.5" r="2.7" fill="#d04254"/><circle cx="336.8" cy="503.1" r="2.7" fill="#d04254"/><circle cx="336.7" cy="501.4" r="2.7" fill="#d04254"/><circle cx="336.6" cy="503.3" r="2.7" fill="#d04254"/><circle cx="336.5" cy="501.7" r="2.7" fill="#d04254"/><circle cx="336.4" cy="503.3" r="2.7" fill="#d04254"/><circle cx="336.4" cy="504.1" r="2.7" fill="#d04254"/><circle cx="336.3" cy="502.1" r="2.7" fill="#d04254"/><circle cx="336.2" cy="503.5" r="2.7" fill="#d04254"/><circle cx="336.2" cy="502.3" r="2.7" fill="#d04254"/><circle cx="336.1" cy="501.4" r="2.7" fill="#d04254"/><circle cx="336.0" cy="503.7" r="2.7" fill="#d04254"/><circle cx="336.0" cy="500.0" r="2.7" fill="#d04254"/><circle cx="335.9" cy="503.3" r="2.7" fill="#d04254"/><circle cx="335.8" cy="504.2" r="2.7" fill="#d04254"/><circle cx="335.8" cy="501.5" r="2.7" fill="#d04254"/><circle cx="335.7" cy="497.5" r="2.7" fill="#d04254"/><circle cx="335.6" cy="503.3" r="2.7" fill="#d04254"/><circle cx="335.6" cy="503.1" r="2.7" fill="#d04254"/><circle cx="335.5" cy="498.5" r="2.7" fill="#d04254"/><circle cx="335.5" cy="503.3" r="2.7" fill="#d04254"/><circle cx="335.4" cy="492.2" r="2.7" fill="#d04254"/><circle cx="335.4" cy="503.3" r="2.7" fill="#d04254"/><circle cx="335.3" cy="503.3" r="2.7" fill="#d04254"/><circle cx="335.3" cy="503.3" r="2.7" fill="#d04254"/><circle cx="335.2" cy="496.3" r="2.7" fill="#d04254"/><circle cx="335.2" cy="497.0" r="2.7" fill="#d04254"/><circle cx="335.1" cy="502.1" r="2.7" fill="#d04254"/><circle cx="335.1" cy="503.9" r="2.7" fill="#d04254"/><circle cx="335.1" cy="501.7" r="2.7" fill="#d04254"/><circle cx="335.0" cy="503.2" r="2.7" fill="#d04254"/><circle cx="335.0" cy="502.0" r="2.7" fill="#d04254"/><circle cx="334.9" cy="502.1" r="2.7" fill="#d04254"/><circle cx="334.9" cy="504.3" r="2.7" fill="#d04254"/><circle cx="334.9" cy="502.6" r="2.7" fill="#d04254"/><circle cx="334.8" cy="503.2" r="2.7" fill="#d04254"/><circle cx="334.8" cy="503.4" r="2.7" fill="#d04254"/><circle cx="334.8" cy="501.2" r="2.7" fill="#d04254"/><circle cx="334.7" cy="500.9" r="2.7" fill="#d04254"/><circle cx="334.7" cy="500.3" r="2.7" fill="#d04254"/><circle cx="334.6" cy="502.3" r="2.7" fill="#d04254"/><circle cx="334.6" cy="504.5" r="2.7" fill="#d04254"/><circle cx="334.6" cy="502.7" r="2.7" fill="#d04254"/><circle cx="334.5" cy="502.2" r="2.7" fill="#d04254"/><circle cx="334.5" cy="503.3" r="2.7" fill="#d04254"/><circle cx="334.5" cy="501.3" r="2.7" fill="#d04254"/><circle cx="334.5" cy="502.9" r="2.7" fill="#d04254"/><circle cx="334.4" cy="503.8" r="2.7" fill="#d04254"/><circle cx="334.4" cy="502.3" r="2.7" fill="#d04254"/><circle cx="334.4" cy="504.0" r="2.7" fill="#d04254"/><circle cx="334.3" cy="502.7" r="2.7" fill="#d04254"/><circle cx="334.3" cy="500.9" r="2.7" fill="#d04254"/><circle cx="334.3" cy="503.4" r="2.7" fill="#d04254"/><circle cx="334.3" cy="502.1" r="2.7" fill="#d04254"/><circle cx="334.2" cy="501.1" r="2.7" fill="#d04254"/><circle cx="334.2" cy="504.4" r="2.7" fill="#d04254"/><circle cx="334.2" cy="502.1" r="2.7" fill="#d04254"/><circle cx="334.2" cy="503.0" r="2.7" fill="#d04254"/><circle cx="334.1" cy="502.7" r="2.7" fill="#d04254"/><circle cx="334.1" cy="501.2" r="2.7" fill="#d04254"/><circle cx="334.1" cy="503.6" r="2.7" fill="#d04254"/><circle cx="334.1" cy="503.0" r="2.7" fill="#d04254"/><circle cx="334.0" cy="502.7" r="2.7" fill="#d04254"/></g>
<g clip-path="url(#cBR)"><polyline points="705.4,504.5 708.2,364.7 711.0,401.0 713.8,433.7 716.6,445.8 719.4,329.5 722.2,475.0 725.0,463.8 727.9,433.7 730.7,426.9 733.5,467.8 736.3,500.0 739.1,485.1 741.9,495.0 744.7,469.7 747.5,496.0 750.3,495.7 753.1,417.6 755.9,477.6 758.7,496.3 761.5,481.8 764.3,481.7 767.1,456.1 769.9,430.7 772.8,495.3 775.6,459.0 778.4,502.7 781.2,491.3 784.0,501.0 786.8,498.8 789.6,502.7 792.4,482.0 795.2,498.0 798.0,502.7 800.8,485.1 803.6,493.4 806.4,490.0 809.2,482.0 812.0,494.7 814.9,500.4 817.7,473.5 820.5,501.4 823.3,496.6 826.1,503.3 828.9,493.4 831.7,502.3 834.5,501.0 837.3,496.3 840.1,497.4 842.9,503.1 845.7,495.2 848.5,501.0 851.3,501.4 854.1,496.6 856.9,503.7 859.8,498.3 862.6,500.5 865.4,503.8 868.2,503.1 871.0,496.0 873.8,503.8 876.6,503.8 879.4,497.5 882.2,503.1 885.0,501.4 887.8,503.3 890.6,501.7 893.4,503.3 896.2,504.1 899.0,502.1 901.9,503.5 904.7,502.3 907.5,501.4 910.3,503.7 913.1,500.0 915.9,503.3 918.7,504.2 921.5,501.5 924.3,497.5 927.1,503.3 929.9,503.1 932.7,498.5 935.5,503.3 938.3,492.2 941.1,503.3 943.9,503.3 946.8,503.3 949.6,496.3 952.4,497.0 955.2,502.1 958.0,503.9 960.8,501.7 963.6,503.2 966.4,502.0 969.2,502.1 972.0,504.3 974.8,502.6 977.6,503.2 980.4,503.4 983.2,501.2 986.0,500.9 988.9,500.3 991.7,502.3 994.5,504.5 997.3,502.7 1000.1,502.2 1002.9,503.3 1005.7,501.3 1008.5,502.9 1011.3,503.8 1014.1,502.3 1016.9,504.0 1019.7,502.7 1022.5,500.9 1025.3,503.4 1028.1,502.1 1030.9,501.1 1033.8,504.4 1036.6,502.1 1039.4,503.0 1042.2,502.7 1045.0,501.2 1047.8,503.6 1050.6,503.0 1053.4,502.7" fill="none" stroke="#a028dc" stroke-width="2" stroke-linejoin="round"/>
<circle cx="705.4" cy="504.5" r="2.7" fill="#a028dc"/><circle cx="708.2" cy="364.7" r="2.7" fill="#a028dc"/><circle cx="711.0" cy="401.0" r="2.7" fill="#a028dc"/><circle cx="713.8" cy="433.7" r="2.7" fill="#a028dc"/><circle cx="716.6" cy="445.8" r="2.7" fill="#a028dc"/><circle cx="719.4" cy="329.5" r="2.7" fill="#a028dc"/><circle cx="722.2" cy="475.0" r="2.7" fill="#a028dc"/><circle cx="725.0" cy="463.8" r="2.7" fill="#a028dc"/><circle cx="727.9" cy="433.7" r="2.7" fill="#a028dc"/><circle cx="730.7" cy="426.9" r="2.7" fill="#a028dc"/><circle cx="733.5" cy="467.8" r="2.7" fill="#a028dc"/><circle cx="736.3" cy="500.0" r="2.7" fill="#a028dc"/><circle cx="739.1" cy="485.1" r="2.7" fill="#a028dc"/><circle cx="741.9" cy="495.0" r="2.7" fill="#a028dc"/><circle cx="744.7" cy="469.7" r="2.7" fill="#a028dc"/><circle cx="747.5" cy="496.0" r="2.7" fill="#a028dc"/><circle cx="750.3" cy="495.7" r="2.7" fill="#a028dc"/><circle cx="753.1" cy="417.6" r="2.7" fill="#a028dc"/><circle cx="755.9" cy="477.6" r="2.7" fill="#a028dc"/><circle cx="758.7" cy="496.3" r="2.7" fill="#a028dc"/><circle cx="761.5" cy="481.8" r="2.7" fill="#a028dc"/><circle cx="764.3" cy="481.7" r="2.7" fill="#a028dc"/><circle cx="767.1" cy="456.1" r="2.7" fill="#a028dc"/><circle cx="769.9" cy="430.7" r="2.7" fill="#a028dc"/><circle cx="772.8" cy="495.3" r="2.7" fill="#a028dc"/><circle cx="775.6" cy="459.0" r="2.7" fill="#a028dc"/><circle cx="778.4" cy="502.7" r="2.7" fill="#a028dc"/><circle cx="781.2" cy="491.3" r="2.7" fill="#a028dc"/><circle cx="784.0" cy="501.0" r="2.7" fill="#a028dc"/><circle cx="786.8" cy="498.8" r="2.7" fill="#a028dc"/><circle cx="789.6" cy="502.7" r="2.7" fill="#a028dc"/><circle cx="792.4" cy="482.0" r="2.7" fill="#a028dc"/><circle cx="795.2" cy="498.0" r="2.7" fill="#a028dc"/><circle cx="798.0" cy="502.7" r="2.7" fill="#a028dc"/><circle cx="800.8" cy="485.1" r="2.7" fill="#a028dc"/><circle cx="803.6" cy="493.4" r="2.7" fill="#a028dc"/><circle cx="806.4" cy="490.0" r="2.7" fill="#a028dc"/><circle cx="809.2" cy="482.0" r="2.7" fill="#a028dc"/><circle cx="812.0" cy="494.7" r="2.7" fill="#a028dc"/><circle cx="814.9" cy="500.4" r="2.7" fill="#a028dc"/><circle cx="817.7" cy="473.5" r="2.7" fill="#a028dc"/><circle cx="820.5" cy="501.4" r="2.7" fill="#a028dc"/><circle cx="823.3" cy="496.6" r="2.7" fill="#a028dc"/><circle cx="826.1" cy="503.3" r="2.7" fill="#a028dc"/><circle cx="828.9" cy="493.4" r="2.7" fill="#a028dc"/><circle cx="831.7" cy="502.3" r="2.7" fill="#a028dc"/><circle cx="834.5" cy="501.0" r="2.7" fill="#a028dc"/><circle cx="837.3" cy="496.3" r="2.7" fill="#a028dc"/><circle cx="840.1" cy="497.4" r="2.7" fill="#a028dc"/><circle cx="842.9" cy="503.1" r="2.7" fill="#a028dc"/><circle cx="845.7" cy="495.2" r="2.7" fill="#a028dc"/><circle cx="848.5" cy="501.0" r="2.7" fill="#a028dc"/><circle cx="851.3" cy="501.4" r="2.7" fill="#a028dc"/><circle cx="854.1" cy="496.6" r="2.7" fill="#a028dc"/><circle cx="856.9" cy="503.7" r="2.7" fill="#a028dc"/><circle cx="859.8" cy="498.3" r="2.7" fill="#a028dc"/><circle cx="862.6" cy="500.5" r="2.7" fill="#a028dc"/><circle cx="865.4" cy="503.8" r="2.7" fill="#a028dc"/><circle cx="868.2" cy="503.1" r="2.7" fill="#a028dc"/><circle cx="871.0" cy="496.0" r="2.7" fill="#a028dc"/><circle cx="873.8" cy="503.8" r="2.7" fill="#a028dc"/><circle cx="876.6" cy="503.8" r="2.7" fill="#a028dc"/><circle cx="879.4" cy="497.5" r="2.7" fill="#a028dc"/><circle cx="882.2" cy="503.1" r="2.7" fill="#a028dc"/><circle cx="885.0" cy="501.4" r="2.7" fill="#a028dc"/><circle cx="887.8" cy="503.3" r="2.7" fill="#a028dc"/><circle cx="890.6" cy="501.7" r="2.7" fill="#a028dc"/><circle cx="893.4" cy="503.3" r="2.7" fill="#a028dc"/><circle cx="896.2" cy="504.1" r="2.7" fill="#a028dc"/><circle cx="899.0" cy="502.1" r="2.7" fill="#a028dc"/><circle cx="901.9" cy="503.5" r="2.7" fill="#a028dc"/><circle cx="904.7" cy="502.3" r="2.7" fill="#a028dc"/><circle cx="907.5" cy="501.4" r="2.7" fill="#a028dc"/><circle cx="910.3" cy="503.7" r="2.7" fill="#a028dc"/><circle cx="913.1" cy="500.0" r="2.7" fill="#a028dc"/><circle cx="915.9" cy="503.3" r="2.7" fill="#a028dc"/><circle cx="918.7" cy="504.2" r="2.7" fill="#a028dc"/><circle cx="921.5" cy="501.5" r="2.7" fill="#a028dc"/><circle cx="924.3" cy="497.5" r="2.7" fill="#a028dc"/><circle cx="927.1" cy="503.3" r="2.7" fill="#a028dc"/><circle cx="929.9" cy="503.1" r="2.7" fill="#a028dc"/><circle cx="932.7" cy="498.5" r="2.7" fill="#a028dc"/><circle cx="935.5" cy="503.3" r="2.7" fill="#a028dc"/><circle cx="938.3" cy="492.2" r="2.7" fill="#a028dc"/><circle cx="941.1" cy="503.3" r="2.7" fill="#a028dc"/><circle cx="943.9" cy="503.3" r="2.7" fill="#a028dc"/><circle cx="946.8" cy="503.3" r="2.7" fill="#a028dc"/><circle cx="949.6" cy="496.3" r="2.7" fill="#a028dc"/><circle cx="952.4" cy="497.0" r="2.7" fill="#a028dc"/><circle cx="955.2" cy="502.1" r="2.7" fill="#a028dc"/><circle cx="958.0" cy="503.9" r="2.7" fill="#a028dc"/><circle cx="960.8" cy="501.7" r="2.7" fill="#a028dc"/><circle cx="963.6" cy="503.2" r="2.7" fill="#a028dc"/><circle cx="966.4" cy="502.0" r="2.7" fill="#a028dc"/><circle cx="969.2" cy="502.1" r="2.7" fill="#a028dc"/><circle cx="972.0" cy="504.3" r="2.7" fill="#a028dc"/><circle cx="974.8" cy="502.6" r="2.7" fill="#a028dc"/><circle cx="977.6" cy="503.2" r="2.7" fill="#a028dc"/><circle cx="980.4" cy="503.4" r="2.7" fill="#a028dc"/><circle cx="983.2" cy="501.2" r="2.7" fill="#a028dc"/><circle cx="986.0" cy="500.9" r="2.7" fill="#a028dc"/><circle cx="988.9" cy="500.3" r="2.7" fill="#a028dc"/><circle cx="991.7" cy="502.3" r="2.7" fill="#a028dc"/><circle cx="994.5" cy="504.5" r="2.7" fill="#a028dc"/><circle cx="997.3" cy="502.7" r="2.7" fill="#a028dc"/><circle cx="1000.1" cy="502.2" r="2.7" fill="#a028dc"/><circle cx="1002.9" cy="503.3" r="2.7" fill="#a028dc"/><circle cx="1005.7" cy="501.3" r="2.7" fill="#a028dc"/><circle cx="1008.5" cy="502.9" r="2.7" fill="#a028dc"/><circle cx="1011.3" cy="503.8" r="2.7" fill="#a028dc"/><circle cx="1014.1" cy="502.3" r="2.7" fill="#a028dc"/><circle cx="1016.9" cy="504.0" r="2.7" fill="#a028dc"/><circle cx="1019.7" cy="502.7" r="2.7" fill="#a028dc"/><circle cx="1022.5" cy="500.9" r="2.7" fill="#a028dc"/><circle cx="1025.3" cy="503.4" r="2.7" fill="#a028dc"/><circle cx="1028.1" cy="502.1" r="2.7" fill="#a028dc"/><circle cx="1030.9" cy="501.1" r="2.7" fill="#a028dc"/><circle cx="1033.8" cy="504.4" r="2.7" fill="#a028dc"/><circle cx="1036.6" cy="502.1" r="2.7" fill="#a028dc"/><circle cx="1039.4" cy="503.0" r="2.7" fill="#a028dc"/><circle cx="1042.2" cy="502.7" r="2.7" fill="#a028dc"/><circle cx="1045.0" cy="501.2" r="2.7" fill="#a028dc"/><circle cx="1047.8" cy="503.6" r="2.7" fill="#a028dc"/><circle cx="1050.6" cy="503.0" r="2.7" fill="#a028dc"/><circle cx="1053.4" cy="502.7" r="2.7" fill="#a028dc"/></g>
<g clip-path="url(#cBL)" style="mix-blend-mode:multiply" fill="#ffff00"><rect x="392" y="319" width="20.3" height="22.8"/><rect x="346" y="409" width="14" height="16"/><rect x="334" y="420" width="19" height="20"/><rect x="363" y="417" width="13" height="17"/></g>
<rect x="696" y="125.5" width="4" height="384" fill="#dcdcdc"/><rect x="328.5" y="315" width="739" height="4" fill="#dcdcdc"/>
<rect x="328.5" y="125.5" width="739" height="384" fill="none" stroke="#a9a9a9" stroke-width="1" shape-rendering="crispEdges"/>
<path d="M322 310.2H328 M325 291.1H328 M322 272.0H328 M325 252.9H328 M322 233.8H328 M325 214.6H328 M322 195.5H328 M325 176.4H328 M322 157.2H328 M325 138.1H328 M322 504.5H328 M325 474.3H328 M322 444.1H328 M325 413.9H328 M322 383.7H328 M325 353.5H328 M322 323.3H328 M331.2 510V515.5 M402.1 510V515.5 M472.9 510V515.5 M543.8 510V515.5 M614.7 510V515.5 M685.6 510V515.5 M705.4 510V515.5 M740.2 510V514 M775.0 510V515.5 M809.8 510V514 M844.6 510V515.5 M879.4 510V514 M914.2 510V515.5 M949.0 510V514 M983.8 510V515.5 M1018.6 510V514 M1053.4 510V515.5" stroke="#8e8e8e" stroke-width="1" fill="none"/>
<text x="317.5" y="314.6" text-anchor="end" font-size="12" fill="#000" letter-spacing="-0.174">0</text>
<text x="317.5" y="276.4" text-anchor="end" font-size="12" fill="#000" letter-spacing="-0.327">0.2</text>
<text x="317.5" y="238.2" text-anchor="end" font-size="12" fill="#000" letter-spacing="-0.327">0.4</text>
<text x="317.5" y="199.9" text-anchor="end" font-size="12" fill="#000" letter-spacing="-0.327">0.6</text>
<text x="317.5" y="161.7" text-anchor="end" font-size="12" fill="#000" letter-spacing="-0.327">0.8</text>
<text x="317.5" y="508.9" text-anchor="end" font-size="12" fill="#000" letter-spacing="-0.174">0</text>
<text x="317.5" y="448.5" text-anchor="end" font-size="12" fill="#000" letter-spacing="-0.174">5</text>
<text x="317.5" y="388.1" text-anchor="end" font-size="12" fill="#000" letter-spacing="-0.174">10</text>
<text x="317.5" y="329.5" text-anchor="end" font-size="12" fill="#000" letter-spacing="-0.174">15</text>
<text x="330" y="529.3" text-anchor="middle" font-size="12" fill="#000" letter-spacing="-0.174">0</text>
<text x="401.9" y="529.3" text-anchor="middle" font-size="12" fill="#000" letter-spacing="-0.174">50</text>
<text x="472.7" y="529.3" text-anchor="middle" font-size="12" fill="#000" letter-spacing="-0.174">100</text>
<text x="543.8" y="529.3" text-anchor="middle" font-size="12" fill="#000" letter-spacing="-0.174">150</text>
<text x="614.5" y="529.3" text-anchor="middle" font-size="12" fill="#000" letter-spacing="-0.174">200</text>
<text x="680.6" y="529.3" text-anchor="middle" font-size="12" fill="#000" letter-spacing="-0.174">250</text>
<text x="704.3" y="529.3" text-anchor="middle" font-size="12" fill="#000" letter-spacing="-0.174">0</text>
<text x="774.6" y="529.3" text-anchor="middle" font-size="12" fill="#000" letter-spacing="-0.327">0.1</text>
<text x="844.2" y="529.3" text-anchor="middle" font-size="12" fill="#000" letter-spacing="-0.327">0.2</text>
<text x="913.8" y="529.3" text-anchor="middle" font-size="12" fill="#000" letter-spacing="-0.327">0.3</text>
<text x="983.4" y="529.3" text-anchor="middle" font-size="12" fill="#000" letter-spacing="-0.327">0.4</text>
<text x="1053.0" y="529.3" text-anchor="middle" font-size="12" fill="#000" letter-spacing="-0.327">0.5</text>
<text x="511" y="545.3" text-anchor="middle" font-size="12" fill="#000" letter-spacing="-0.156">Period</text>
<text x="882.7" y="545.3" text-anchor="middle" font-size="12" fill="#000" letter-spacing="-0.222">Frequency</text>
<text x="296.8" y="219.8" text-anchor="middle" font-size="12" fill="#000" letter-spacing="-0.211" transform="rotate(-90 296.8 219.8)">Spectral Density</text>
<text x="296.8" y="414" text-anchor="middle" font-size="12" fill="#000" letter-spacing="-0.082" transform="rotate(-90 296.8 414)">Periodogram</text>
<text x="1079.3" y="317.5" text-anchor="middle" font-size="12" font-weight="bold" fill="#bcbcbc" letter-spacing="-0.302" transform="rotate(90 1079.3 317.5)">Group Y</text>
<path d="M1109 239H1129" stroke="#3e6cdc" stroke-width="2"/>
<path d="M1109 254H1129" stroke="#d04254" stroke-width="2"/>
<path d="M1109 269H1129" stroke="#3cad43" stroke-width="2"/>
<path d="M1109 284H1129" stroke="#a028dc" stroke-width="2"/>
<circle cx="1119" cy="299" r="2.6" fill="#3e6cdc"/><circle cx="1119" cy="314" r="2.6" fill="#a028dc"/>
<path d="M3.6 22.4L11.6 22.4L11.6 14.6Z" fill="#c8c8c8" stroke="#747474" stroke-width="1.1" stroke-linejoin="round"/>
<path d="M17.2 217.8L25.6 217.8L25.6 209.9Z" fill="#c8c8c8" stroke="#747474" stroke-width="1.1" stroke-linejoin="round"/>
<path d="M17.2 445.5L25.6 445.5L25.6 437.6Z" fill="#c8c8c8" stroke="#747474" stroke-width="1.1" stroke-linejoin="round"/>
<defs><linearGradient id="gb" x1="0" y1="0" x2="0" y2="1"><stop offset="0" stop-color="#fff"/><stop offset="1" stop-color="#e2e2e2"/></linearGradient><linearGradient id="gbar" x1="0" y1="0" x2="1" y2="0"><stop offset="0" stop-color="#b9d0fb"/><stop offset="1" stop-color="#7fa6ee"/></linearGradient><linearGradient id="gtri" x1="0" y1="0" x2="1" y2="1"><stop offset="0.3" stop-color="#3a6ed2"/><stop offset="1" stop-color="#2255b8"/></linearGradient><linearGradient id="gmid" x1="0" y1="0" x2="0" y2="1"><stop offset="0" stop-color="#5e92e6"/><stop offset="1" stop-color="#2f6fd8"/></linearGradient><linearGradient id="gdk" x1="0" y1="0" x2="0" y2="1"><stop offset="0" stop-color="#1747ae"/><stop offset="1" stop-color="#062a8c"/></linearGradient><linearGradient id="glt" x1="0" y1="0" x2="0" y2="1"><stop offset="0" stop-color="#c3d7fb"/><stop offset="1" stop-color="#94b7f3"/></linearGradient></defs>
<rect x="17.8" y="13.7" width="12.2" height="10.600000000000001" rx="2.2" fill="url(#gb)" stroke="#b4b4b4"/>
<path d="M19.7 16.9H28.099999999999998L23.9 21.2Z" fill="#d0101a"/>
<rect x="15.5" y="60.7" width="12.7" height="10.399999999999991" rx="2.2" fill="url(#gb)" stroke="#b4b4b4"/>
<path d="M17.650000000000002 63.800000000000004H26.05L21.85 68.10000000000001Z" fill="#d0101a"/>
<rect x="31.5" y="208.9" width="12.600000000000001" height="10.599999999999994" rx="2.2" fill="url(#gb)" stroke="#b4b4b4"/>
<path d="M33.599999999999994 212.1H42.0L37.8 216.39999999999998Z" fill="#d0101a"/>
<rect x="31.5" y="436.9" width="12.600000000000001" height="10.600000000000023" rx="2.2" fill="url(#gb)" stroke="#b4b4b4"/>
<path d="M33.599999999999994 440.09999999999997H42.0L37.8 444.4Z" fill="#d0101a"/>
<path d="M19 90.19999999999999H30.8V79.39999999999999Z" fill="url(#gtri)"/>
<path d="M19 107.19999999999999H30.8V96.39999999999999Z" fill="url(#gtri)"/>
<path d="M19 124.19999999999999H30.8V113.39999999999999Z" fill="url(#gtri)"/>
<path d="M19 141.2H30.8V130.4Z" fill="url(#gtri)"/>
<path d="M19 158.2H30.8V147.4Z" fill="url(#gtri)"/>
<path d="M19 175.2H30.8V164.4Z" fill="url(#gtri)"/>
<path d="M19 192.2H30.8V181.4Z" fill="url(#gtri)"/>
<path d="M243.0 257.45L245.8 260.34999999999997L248.60000000000002 257.45" fill="none" stroke="#555" stroke-width="1.1"/>
<path d="M243.0 281.45L245.8 284.34999999999997L248.60000000000002 281.45" fill="none" stroke="#555" stroke-width="1.1"/>
<path d="M243.0 305.45L245.8 308.34999999999997L248.60000000000002 305.45" fill="none" stroke="#555" stroke-width="1.1"/>
<path d="M243.0 329.45L245.8 332.34999999999997L248.60000000000002 329.45" fill="none" stroke="#555" stroke-width="1.1"/>
<path d="M243.0 353.45L245.8 356.34999999999997L248.60000000000002 353.45" fill="none" stroke="#555" stroke-width="1.1"/>
<path d="M243.0 377.45L245.8 380.34999999999997L248.60000000000002 377.45" fill="none" stroke="#555" stroke-width="1.1"/>
<path d="M243.0 401.45L245.8 404.34999999999997L248.60000000000002 401.45" fill="none" stroke="#555" stroke-width="1.1"/>
<path d="M243.0 465.2L245.8 468.09999999999997L248.60000000000002 465.2" fill="none" stroke="#555" stroke-width="1.1"/>
<path d="M243.0 489.2L245.8 492.09999999999997L248.60000000000002 489.2" fill="none" stroke="#555" stroke-width="1.1"/>
<path d="M243.0 513.1999999999999L245.8 516.1L248.60000000000002 513.1999999999999" fill="none" stroke="#555" stroke-width="1.1"/>
<path d="M243.0 537.1999999999999L245.8 540.1L248.60000000000002 537.1999999999999" fill="none" stroke="#555" stroke-width="1.1"/>
<path d="M263.09999999999997 213.5L266.7 209.89999999999998L270.3 213.5" fill="none" stroke="#8a8a8a" stroke-width="1.3"/>
<path d="M263.7 547.7L267.3 551.3L270.90000000000003 547.7" fill="none" stroke="#8a8a8a" stroke-width="1.3"/>
<path d="M137.5 417.5V429L144.3 423.2Z" fill="none" stroke="#6a6a6a" stroke-width="1"/>
<path d="M140 556.5H249" stroke="#555" stroke-width="1"/><path d="M191.5 556.5L195 552.4L198.5 556.5" fill="#eef4fb" stroke="#5b8fc8" stroke-width="1"/>
<rect x="1239" y="0" width="2" height="558" fill="#fdfdfd"/><rect x="1239" y="0" width="1" height="558" fill="#d4d4d4"/><rect x="1239.6" y="222" width="1.6" height="18" fill="#cfcfcf"/><rect x="1239.6" y="240" width="1.6" height="72" fill="#a3aecb"/><rect x="1239.6" y="312" width="1.6" height="246" fill="#c9c9c9"/>
<rect x="1239.8" y="10" width="1.4" height="1" fill="#222"/><rect x="1239.8" y="14" width="1.4" height="1" fill="#223"/><rect x="1239.8" y="18" width="1.4" height="1" fill="#222"/><rect x="1239.8" y="30" width="1.4" height="1" fill="#222"/><rect x="1239.8" y="33" width="1.4" height="1" fill="#222"/><rect x="1239.8" y="37" width="1.4" height="1" fill="#222"/><rect x="1239.8" y="48.5" width="1.4" height="7.5" fill="#c8801e"/><rect x="1239.8" y="66" width="1.4" height="1" fill="#222"/><rect x="1239.8" y="69" width="1.4" height="1" fill="#222"/><rect x="1239.8" y="72" width="1.4" height="3" fill="#6f9fd8"/><rect x="1239.8" y="86" width="1.4" height="8" fill="#c8922e"/><rect x="1239.8" y="96" width="1.4" height="1" fill="#222"/><rect x="1239.8" y="105" width="1.4" height="9" fill="#c8922e"/><rect x="1239.8" y="122" width="1.4" height="1" fill="#222"/><rect x="1239.8" y="126" width="1.4" height="1" fill="#222"/><rect x="1239.8" y="130" width="1.4" height="1" fill="#222"/><rect x="1239.8" y="145" width="1.4" height="6" fill="#8fb0e0"/><rect x="1239.8" y="162" width="1.4" height="1" fill="#222"/><rect x="1239.8" y="167" width="1.4" height="1" fill="#222"/><rect x="1239.8" y="180" width="1.4" height="1" fill="#555"/><rect x="1239.8" y="195" width="1.4" height="1" fill="#222"/><rect x="1239.8" y="208" width="1.4" height="1" fill="#555"/>
<rect x="278" y="33" width="30" height="30" fill="#0b78d7"/><rect x="279" y="34" width="27" height="27" fill="#a4b5da"/>
<path d="M280.5 35V60.5H306" fill="none" stroke="#5a5f78" stroke-width="1"/>
<rect x="292.9" y="35.9" width="3" height="3" fill="#1d4fb6"/><rect x="293.9" y="36.9" width="1" height="1" fill="#5b86dc"/>
<rect x="287.9" y="41.1" width="3" height="3" fill="#1d4fb6"/><rect x="288.9" y="42.1" width="1" height="1" fill="#5b86dc"/>
<rect x="302.0" y="42.9" width="3" height="3" fill="#1d4fb6"/><rect x="303.0" y="43.9" width="1" height="1" fill="#5b86dc"/>
<rect x="296.0" y="45.9" width="3" height="3" fill="#1d4fb6"/><rect x="297.0" y="46.9" width="1" height="1" fill="#5b86dc"/>
<rect x="283.9" y="48.0" width="3" height="3" fill="#1d4fb6"/><rect x="284.9" y="49.0" width="1" height="1" fill="#5b86dc"/>
<rect x="301.0" y="50.9" width="3" height="3" fill="#1d4fb6"/><rect x="302.0" y="51.9" width="1" height="1" fill="#5b86dc"/>
<rect x="289.8" y="52.9" width="3" height="3" fill="#1d4fb6"/><rect x="290.8" y="53.9" width="1" height="1" fill="#5b86dc"/>
<rect x="294.8" y="56.0" width="3" height="3" fill="#1d4fb6"/><rect x="295.8" y="57.0" width="1" height="1" fill="#5b86dc"/>
<path d="M310.6 35V60.5H336" fill="none" stroke="#6c6c70" stroke-width="1"/>
<rect x="316.0" y="38.0" width="3" height="3" fill="#6f98e6"/><rect x="317.0" y="39.0" width="1" height="1" fill="#c4d6f8"/>
<rect x="324.0" y="35.9" width="3" height="3" fill="#6f98e6"/><rect x="325.0" y="36.9" width="1" height="1" fill="#c4d6f8"/>
<rect x="327.0" y="41.8" width="3" height="3" fill="#6f98e6"/><rect x="328.0" y="42.8" width="1" height="1" fill="#c4d6f8"/>
<rect x="331.0" y="43.8" width="3" height="3" fill="#6f98e6"/><rect x="332.0" y="44.8" width="1" height="1" fill="#c4d6f8"/>
<rect x="312.0" y="49.8" width="3" height="3" fill="#6f98e6"/><rect x="313.0" y="50.8" width="1" height="1" fill="#c4d6f8"/>
<rect x="318.0" y="49.0" width="3" height="3" fill="#6f98e6"/><rect x="319.0" y="50.0" width="1" height="1" fill="#c4d6f8"/>
<rect x="326.0" y="52.8" width="3" height="3" fill="#6f98e6"/><rect x="327.0" y="53.8" width="1" height="1" fill="#c4d6f8"/>
<rect x="319.0" y="56.0" width="3" height="3" fill="#6f98e6"/><rect x="320.0" y="57.0" width="1" height="1" fill="#c4d6f8"/>
<path d="M311.3 47.8C314 45 318 44.6 322 46.8S330 51.4 335.6 48" fill="none" stroke="#2347a6" stroke-width="1.4"/>
<path d="M340.6 35V60.5H366" fill="none" stroke="#6c6c70" stroke-width="1"/>
<rect x="354.0" y="35.9" width="3" height="3" fill="#6f98e6"/><rect x="355.0" y="36.9" width="1" height="1" fill="#c4d6f8"/>
<rect x="350.0" y="39.9" width="3" height="3" fill="#6f98e6"/><rect x="351.0" y="40.9" width="1" height="1" fill="#c4d6f8"/>
<rect x="345.0" y="41.9" width="3" height="3" fill="#6f98e6"/><rect x="346.0" y="42.9" width="1" height="1" fill="#c4d6f8"/>
<rect x="342.0" y="46.8" width="3" height="3" fill="#6f98e6"/><rect x="343.0" y="47.8" width="1" height="1" fill="#c4d6f8"/>
<rect x="361.0" y="45.9" width="3" height="3" fill="#6f98e6"/><rect x="362.0" y="46.9" width="1" height="1" fill="#c4d6f8"/>
<rect x="356.0" y="48.0" width="3" height="3" fill="#6f98e6"/><rect x="357.0" y="49.0" width="1" height="1" fill="#c4d6f8"/>
<rect x="351.0" y="52.9" width="3" height="3" fill="#6f98e6"/><rect x="352.0" y="53.9" width="1" height="1" fill="#c4d6f8"/>
<rect x="347.0" y="56.0" width="3" height="3" fill="#6f98e6"/><rect x="348.0" y="57.0" width="1" height="1" fill="#c4d6f8"/>
<path d="M341.3 54.3L364.7 42.6" stroke="#0d2f94" stroke-width="1.7"/>
<path d="M370.6 35V60.5H396" fill="none" stroke="#6c6c70" stroke-width="1"/>
<rect x="382.0" y="34.9" width="3" height="3" fill="#6f98e6"/><rect x="383.0" y="35.9" width="1" height="1" fill="#c4d6f8"/>
<rect x="373.0" y="38.9" width="3" height="3" fill="#6f98e6"/><rect x="374.0" y="39.9" width="1" height="1" fill="#c4d6f8"/>
<rect x="377.0" y="39.9" width="3" height="3" fill="#6f98e6"/><rect x="378.0" y="40.9" width="1" height="1" fill="#c4d6f8"/>
<rect x="391.0" y="41.8" width="3" height="3" fill="#6f98e6"/><rect x="392.0" y="42.8" width="1" height="1" fill="#c4d6f8"/>
<rect x="385.0" y="45.0" width="3" height="3" fill="#6f98e6"/><rect x="386.0" y="46.0" width="1" height="1" fill="#c4d6f8"/>
<rect x="373.0" y="46.9" width="3" height="3" fill="#6f98e6"/><rect x="374.0" y="47.9" width="1" height="1" fill="#c4d6f8"/>
<rect x="390.0" y="49.9" width="3" height="3" fill="#6f98e6"/><rect x="391.0" y="50.9" width="1" height="1" fill="#c4d6f8"/>
<rect x="379.0" y="51.9" width="3" height="3" fill="#6f98e6"/><rect x="380.0" y="52.9" width="1" height="1" fill="#c4d6f8"/>
<rect x="384.0" y="55.0" width="3" height="3" fill="#6f98e6"/><rect x="385.0" y="56.0" width="1" height="1" fill="#c4d6f8"/>
<rect x="373.0" y="56.0" width="3" height="3" fill="#6f98e6"/><rect x="374.0" y="57.0" width="1" height="1" fill="#c4d6f8"/>
<rect x="388.0" y="56.9" width="3" height="3" fill="#6f98e6"/><rect x="389.0" y="57.9" width="1" height="1" fill="#c4d6f8"/>
<ellipse cx="384" cy="47.4" rx="13.2" ry="5.8" transform="rotate(-31 384 47.4)" fill="rgba(120,150,232,0.45)" stroke="#3a70e2" stroke-width="1.4"/>
<rect x="400.5" y="35.5" width="25.2" height="25.2" fill="#87aaec" stroke="#6e6e6e" stroke-width="1"/>
<clipPath id="c5"><rect x="401" y="36" width="24.2" height="24.2"/></clipPath><g clip-path="url(#c5)">
<path d="M411.2 35.5L411.5 39L408.9 42.3L404.4 45.5L402.8 49.4L404.4 53.9L408.9 57.1L414.1 57.7L418.6 55.2L420.8 50.6L419.9 46.8L421.2 42.9L424.4 36.5L424.4 35.5Z" fill="#4d7eda" stroke="#4d7eda" stroke-width="0.8" stroke-linejoin="round"/>
<path d="M414.1 35.5L414.4 39L412.1 42.3L407.9 46.1L406.6 50L407.9 53.2L411.5 55.2L415.4 54.5L417.6 51.3L417 47.4L418.6 42.9L421.8 36.5L421.8 35.5Z" fill="#2f5cbc" stroke="#2f5cbc" stroke-width="0.8" stroke-linejoin="round"/>
<path d="M415.4 35.5L416 39.7L414.1 44.2L408.9 47.4L407.6 50.6L409.5 53.2L412.8 53.5L415.4 51.3L415.4 48.1L416.6 44.2L418.6 39L419.9 35.5Z" fill="#173c84" stroke="#173c84" stroke-width="0.8" stroke-linejoin="round"/>
</g>
<rect x="435" y="33" width="30" height="30" fill="#0b78d7"/><rect x="436" y="34" width="27" height="27" fill="#a4b5da"/>
<path d="M437.5 35V60.5H463" fill="none" stroke="#5a5f78" stroke-width="1"/>
<path d="M439.7 54.3L446.3 48.2L450.6 52L462.8 39.5" fill="none" stroke="#0d2f8e" stroke-width="2"/>
<path d="M467.6 35V60.5H493" fill="none" stroke="#6c6c70" stroke-width="1"/>
<rect x="470.5" y="40.4" width="5.0" height="19.6" fill="url(#gbar)" stroke="#2a5fd2" stroke-width="1"/>
<rect x="477.4" y="44.4" width="5.0" height="15.600000000000001" fill="url(#gbar)" stroke="#2a5fd2" stroke-width="1"/>
<rect x="484.5" y="35.6" width="5.100000000000023" height="24.4" fill="url(#gbar)" stroke="#2a5fd2" stroke-width="1"/>
<path d="M497.6 35V60.5H523" fill="none" stroke="#6c6c70" stroke-width="1"/>
<path d="M498.1 38.2L502.2 42L505 41L508.5 44.6L513.7 40.2L516.2 41L521 46.7V60H498.1Z" fill="#5d90e2"/>
<path d="M498.1 51.7L501.2 50.5L503.7 51.7L507.5 48L510 51.7L512.5 53L516.2 51.7L521 54.9V60H498.1Z" fill="#0b2f8a"/>
<path d="M527.6 35V60.5H553" fill="none" stroke="#6c6c70" stroke-width="1"/>
<path d="M533.5 40.5V56.5M531.7 40.5H535.3M531.7 56.5H535.3" stroke="#2a5fd2" stroke-width="1.1" fill="none"/><rect x="531.5" y="43.3" width="4" height="10.300000000000004" fill="#c0d4fa" stroke="#2a5fd2" stroke-width="1"/><path d="M531.5 49.3H535.5" stroke="#2a5fd2" stroke-width="1"/>
<path d="M540.6 36.5V58M538.8000000000001 36.5H542.4M538.8000000000001 58H542.4" stroke="#2a5fd2" stroke-width="1.1" fill="none"/><rect x="538.6" y="39.3" width="4" height="16.0" fill="#c0d4fa" stroke="#2a5fd2" stroke-width="1"/><path d="M538.6 47.4H542.6" stroke="#2a5fd2" stroke-width="1"/>
<path d="M547.5 38.3V52.4M545.7 38.3H549.3M545.7 52.4H549.3" stroke="#2a5fd2" stroke-width="1.1" fill="none"/><rect x="545.5" y="41.1" width="4" height="8.399999999999999" fill="#c0d4fa" stroke="#2a5fd2" stroke-width="1"/><path d="M545.5 45.3H549.5" stroke="#2a5fd2" stroke-width="1"/>
<path d="M557.6 35V60.5H583.2" fill="none" stroke="#5f5f66" stroke-width="1.2"/>
<rect x="558.6" y="38.6" width="8.9" height="3.6" fill="#86acf0" stroke="#2a5fd2" stroke-width="1"/>
<rect x="558.6" y="42.2" width="13.9" height="4.2" fill="#86acf0" stroke="#2a5fd2" stroke-width="1"/>
<rect x="558.6" y="46.4" width="20.1" height="4.2" fill="#86acf0" stroke="#2a5fd2" stroke-width="1"/>
<rect x="558.6" y="50.6" width="10.8" height="4.2" fill="#86acf0" stroke="#2a5fd2" stroke-width="1"/>
<rect x="558.6" y="54.8" width="7.6" height="3.8" fill="#86acf0" stroke="#2a5fd2" stroke-width="1"/>
<rect x="594.5" y="35.7" width="6.4" height="12.6" fill="#b7d1fc"/>
<rect x="600.8" y="35.7" width="6.4" height="12.6" fill="#3f7fe0"/>
<rect x="607.1" y="35.7" width="6.4" height="12.6" fill="#8db2f1"/>
<rect x="613.4" y="35.7" width="6.4" height="12.6" fill="#6c98e2"/>
<rect x="594.5" y="48.2" width="6.4" height="12.6" fill="#3f7fe0"/>
<rect x="600.8" y="48.2" width="6.4" height="12.6" fill="#8db2f1"/>
<rect x="607.1" y="48.2" width="6.4" height="12.6" fill="#3768c6"/>
<rect x="613.4" y="48.2" width="6.4" height="12.6" fill="#b7d1fc"/>
<rect x="594.4" y="35.6" width="25.4" height="25.2" fill="none" stroke="#8e8e8e" stroke-width="1"/>
<path d="M636.9 48L636.22 60.98A13 13 0 0 1 627.87 38.65Z" fill="#3e7de0"/>
<path d="M636.9 48L627.87 38.65A13 13 0 0 1 648.78 42.71Z" fill="#2357ba"/>
<path d="M636.9 48L648.78 42.71A13 13 0 0 1 647.14 56.00Z" fill="#5c9be5"/>
<path d="M636.9 48L647.14 56.00A13 13 0 0 1 636.22 60.98Z" fill="#9cc0f6"/>
<rect x="655.3" y="36" width="23.8" height="24" fill="#5a5a5a"/>
<rect x="656" y="36.8" width="12.0" height="9.8" fill="#90b5f3"/>
<rect x="669" y="36.8" width="9.4" height="9.8" fill="#3f7fe0"/>
<rect x="656" y="47.8" width="6.2" height="8.4" fill="#b7d1fc"/>
<rect x="656" y="57.2" width="6.2" height="2.2" fill="#3f7fe0"/>
<rect x="663.3" y="47.8" width="7.7" height="11.6" fill="#70a3f8"/>
<rect x="672.1" y="47.8" width="6.3" height="11.6" fill="#b7d1fc"/>
<rect x="684" y="35.3" width="25" height="25.5" fill="#9a9a9a"/>
<rect x="684.8" y="35.6" width="7.2" height="8.4" fill="url(#gmid)"/><rect x="684.8" y="44" width="7.2" height="6" fill="url(#gdk)"/><rect x="684.8" y="50" width="7.2" height="10.4" fill="url(#glt)"/>
<rect x="693.1" y="35.6" width="7.1" height="7.4" fill="url(#gmid)"/><rect x="693.1" y="43" width="7.1" height="4" fill="url(#gdk)"/><rect x="693.1" y="47" width="7.1" height="13.4" fill="url(#glt)"/>
<rect x="701.3" y="35.6" width="7.0" height="11.4" fill="url(#gmid)"/><rect x="701.3" y="47" width="7.0" height="5" fill="url(#gdk)"/><rect x="701.3" y="52" width="7.0" height="8.4" fill="url(#glt)"/>
<path d="M721.6 35V60.5H747" fill="none" stroke="#5f5f66" stroke-width="1.2"/>
<rect x="732.8" y="35.8" width="14" height="9.6" fill="#fff" stroke="#2a4fc4" stroke-width="1.2"/><path d="M732.5 46H747.2" stroke="#1a3596" stroke-width="1"/>
<path d="M735 39H738.4M741.4 39H745M735 42.4H738.4M741.4 42.4H745" stroke="#1a3596" stroke-width="1.3"/><path d="M739.9 37.3V44" stroke="#1a3596" stroke-width="1" stroke-dasharray="1.2 1"/>
<rect x="749.4" y="33.2" width="89.6" height="29.6" fill="#e6e6e6"/>
<path d="M751.6 35V60.3H777" fill="none" stroke="#c2c2c2" stroke-width="1.2"/>
<text x="753.5" y="49.5" font-family="Liberation Serif, serif" font-style="italic" font-weight="bold" font-size="17" fill="#e2d3a2" style="font-family:'Liberation Serif',serif">f</text>
<text x="762.8" y="47.8" font-size="12.5" fill="#e2d3a2" style="font-family:'Liberation Sans',sans-serif" letter-spacing="-1">(•)</text>
<path d="M751.9 54.6C756 51 760 51 764 54S772 57.5 777 53.6" fill="none" stroke="#b6c5e0" stroke-width="1.3"/>
<path d="M783.1 36.5H791.2L795 44.2L785 50.5H781.6V40.5H783.1Z" fill="#c9d4ea" stroke="#c4c4c4" stroke-width="0.8"/><path d="M791.2 35.6H806.9V46.7L803.1 47.4L795 44.2Z" fill="#a6b4d1" stroke="#c4c4c4" stroke-width="0.8"/><path d="M785 50.5L795 44.2L803.1 47.4H805.6V52.4L799.7 58V60.5H783.5V51.7Z" fill="#b4c4e1" stroke="#c4c4c4" stroke-width="0.8"/>
<path d="M811.9 38L836.9 59.2M811.9 51.7L836.9 42.4M811.9 58L824.4 54.2L836.9 37.4" fill="none" stroke="#b7c6e6" stroke-width="1.2"/><rect x="811.6" y="35.6" width="25.3" height="24.9" fill="none" stroke="#c6c6c6" stroke-width="1"/><path d="M824.4 35.6V60.5" stroke="#c6c6c6" stroke-width="1"/>
</svg>
</body></html>
